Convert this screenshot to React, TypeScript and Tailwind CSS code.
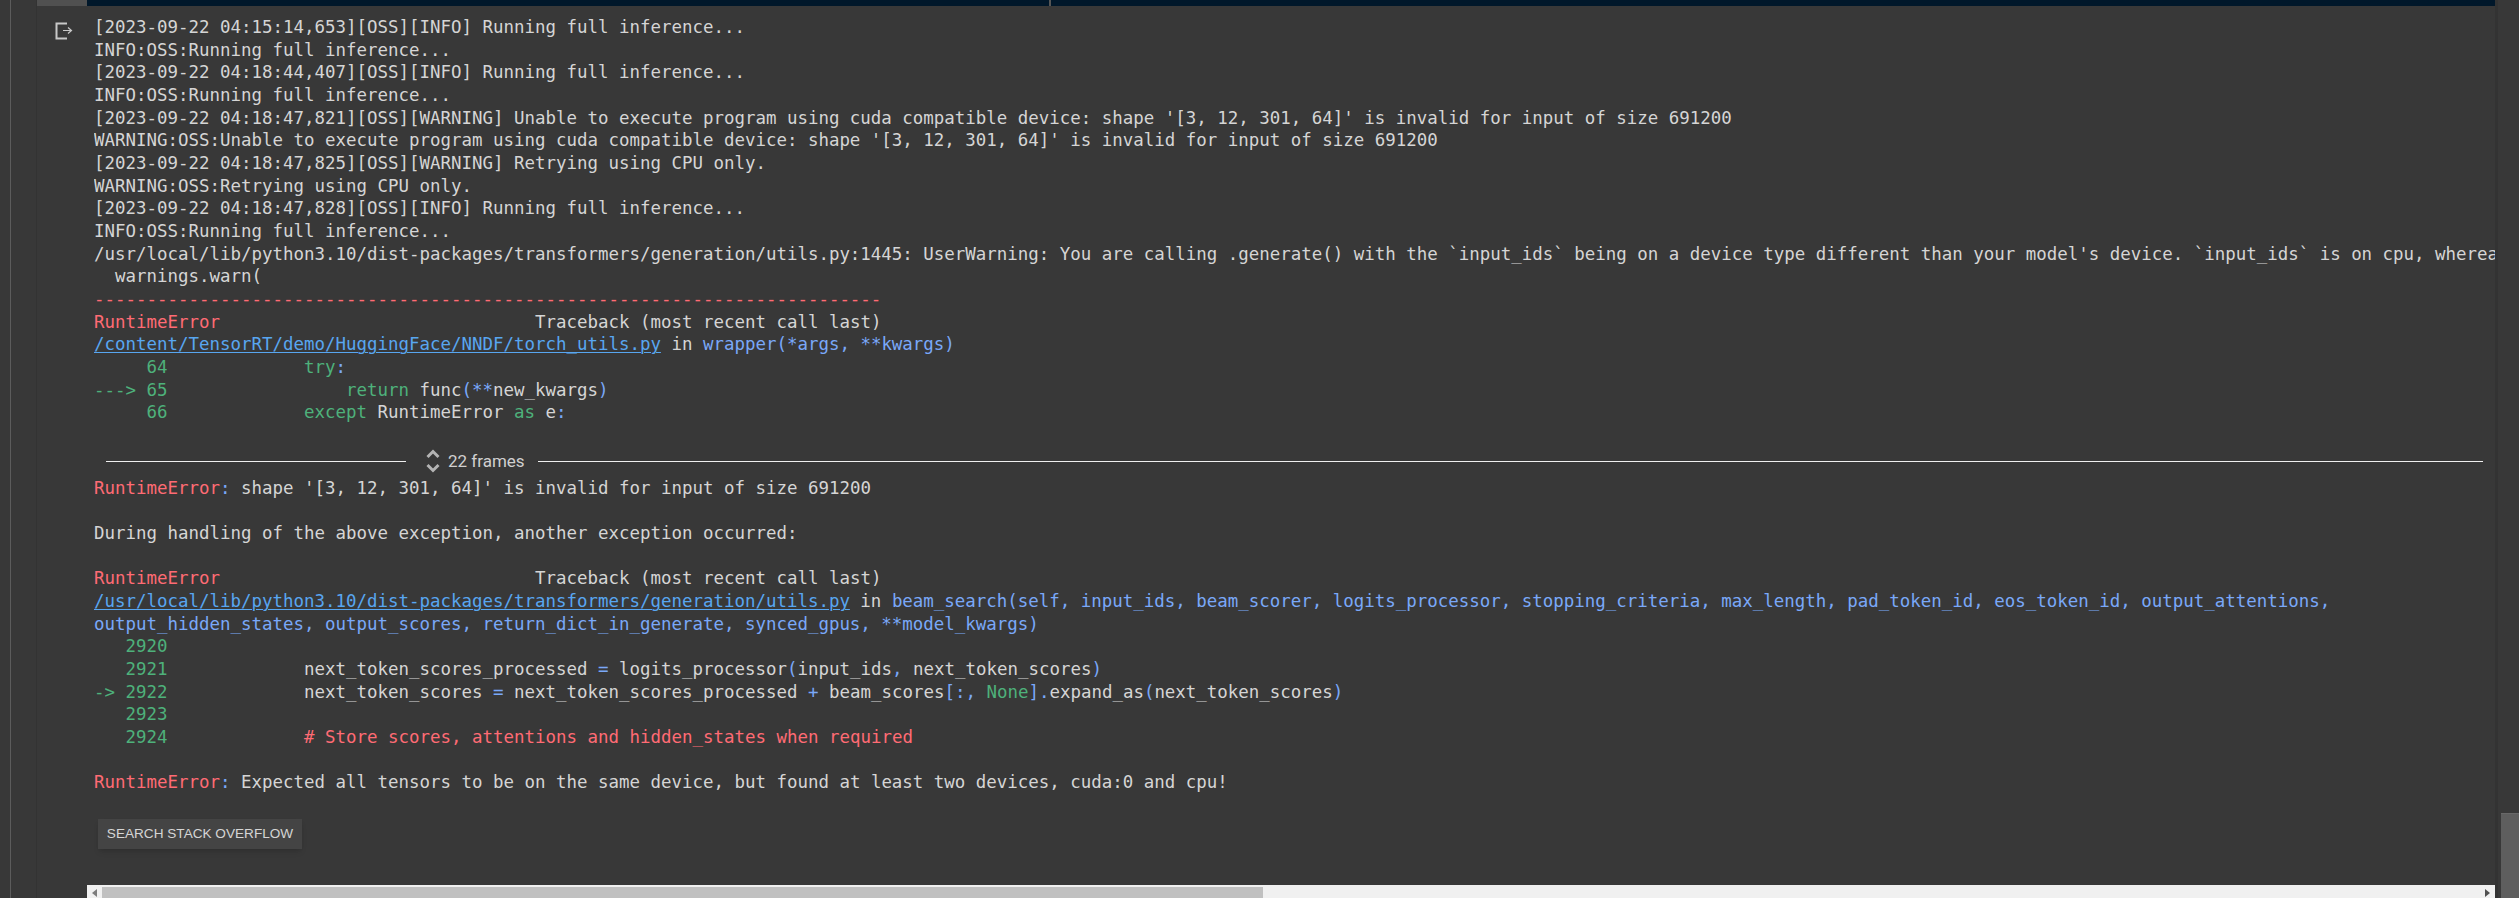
import React from 'react';

const R = ({ children }: { children: React.ReactNode }) => (
  <span className="text-[#ff6b74]">{children}</span>
);
const G = ({ children }: { children: React.ReactNode }) => (
  <span className="text-[#4eb17b]">{children}</span>
);
const B = ({ children }: { children: React.ReactNode }) => (
  <span className="text-[#7aa8f8]">{children}</span>
);
const L = ({ children }: { children: React.ReactNode }) => (
  <span className="text-[#58a6f0] underline decoration-1 underline-offset-2">{children}</span>
);

const Line = ({ children }: { children?: React.ReactNode }) => (
  <div className="h-[22.67px] whitespace-pre">{children}</div>
);

const Traceback = () => (
  <Line>
    <R>RuntimeError</R>
    {'                              Traceback (most recent call last)'}
  </Line>
);

const OutputIcon = () => (
  <svg width="20" height="18" viewBox="0 0 20 18" fill="none" stroke="#c8c8c8">
    <path d="M11 2.5V1.5H1.5V16.5H11V15.5" strokeWidth="2" />
    <path d="M8 8.5H16M13 5.5L16.5 8.5L13 11.5" strokeWidth="1.2" />
  </svg>
);

const UpDownIcon = () => (
  <svg width="14" height="24" viewBox="0 0 14 24" fill="none" stroke="#b4b4b4" strokeWidth="3">
    <path d="M1.5 8L7 2.5L12.5 8" />
    <path d="M1.5 16L7 21.5L12.5 16" />
  </svg>
);

const FramesRow = () => (
  <div className="mt-[22px] flex h-[31px] items-center pl-3">
    <div className="h-px w-[300px] bg-[#f0f0f0]" />
    <div className="ml-5 mr-2 flex items-center">
      <UpDownIcon />
    </div>
    <span className="font-['Roboto',sans-serif] text-[17px] text-[#d0d0d0]">22 frames</span>
    <div className="ml-[13px] mr-3 h-px flex-1 bg-[#f0f0f0]" />
  </div>
);

const App = () => {
  return (
    <div className="flex h-[898px] w-[2519px] overflow-hidden bg-[#383838]">
      <div className="w-[37px] shrink-0 border-r border-[#333333] pl-[10px]">
        <div className="h-full w-[1px] bg-[#5c5c5c]" />
      </div>

      <div className="flex w-[2458px] shrink-0 flex-col">
        <div className="flex h-[6px] shrink-0">
          <div className="w-[50px] bg-[#505050]" />
          <div className="w-[962px] bg-[#00172a]" />
          <div className="w-[2px] bg-[#555555]" />
          <div className="flex-1 bg-[#00172a]" />
        </div>

        <div className="flex min-h-0 flex-1">
          <div className="w-[57px] shrink-0 pl-[18px] pt-[16px]">
            <OutputIcon />
          </div>
          <div className="min-w-0 flex-1 overflow-hidden pt-[10px] font-['DejaVu_Sans_Mono',monospace] text-[17.44px] leading-[22.67px] text-[#d5d5d5]">
            <Line>[2023-09-22 04:15:14,653][OSS][INFO] Running full inference...</Line>
            <Line>INFO:OSS:Running full inference...</Line>
            <Line>[2023-09-22 04:18:44,407][OSS][INFO] Running full inference...</Line>
            <Line>INFO:OSS:Running full inference...</Line>
            <Line>[2023-09-22 04:18:47,821][OSS][WARNING] Unable to execute program using cuda compatible device: shape '[3, 12, 301, 64]' is invalid for input of size 691200</Line>
            <Line>WARNING:OSS:Unable to execute program using cuda compatible device: shape '[3, 12, 301, 64]' is invalid for input of size 691200</Line>
            <Line>[2023-09-22 04:18:47,825][OSS][WARNING] Retrying using CPU only.</Line>
            <Line>WARNING:OSS:Retrying using CPU only.</Line>
            <Line>[2023-09-22 04:18:47,828][OSS][INFO] Running full inference...</Line>
            <Line>INFO:OSS:Running full inference...</Line>
            <Line>/usr/local/lib/python3.10/dist-packages/transformers/generation/utils.py:1445: UserWarning: You are calling .generate() with the `input_ids` being on a device type different than your model's device. `input_ids` is on cpu, whereas</Line>
            <Line>{'  warnings.warn('}</Line>
            <Line>
              <R>---------------------------------------------------------------------------</R>
            </Line>
            <Traceback />
            <Line>
              <L>/content/TensorRT/demo/HuggingFace/NNDF/torch_utils.py</L> in <B>wrapper(*args, **kwargs)</B>
            </Line>
            <Line>
              <G>{'     64             try'}</G><B>:</B>
            </Line>
            <Line>
              <G>{'---> 65                 return'}</G> func<B>(**</B>new_kwargs<B>)</B>
            </Line>
            <Line>
              <G>{'     66             except'}</G> RuntimeError <G>as</G> e<B>:</B>
            </Line>
            <FramesRow />
            <Line>
              <R>RuntimeError</R><B>:</B> shape '[3, 12, 301, 64]' is invalid for input of size 691200
            </Line>
            <Line />
            <Line>During handling of the above exception, another exception occurred:</Line>
            <Line />
            <Traceback />
            <Line>
              <L>/usr/local/lib/python3.10/dist-packages/transformers/generation/utils.py</L> in <B>beam_search(self, input_ids, beam_scorer, logits_processor, stopping_criteria, max_length, pad_token_id, eos_token_id, output_attentions,</B>
            </Line>
            <Line>
              <B>output_hidden_states, output_scores, return_dict_in_generate, synced_gpus, **model_kwargs)</B>
            </Line>
            <Line>
              <G>{'   2920'}</G>
            </Line>
            <Line>
              <G>{'   2921'}</G>
              {'             next_token_scores_processed '}<B>=</B> logits_processor<B>(</B>input_ids<B>,</B> next_token_scores<B>)</B>
            </Line>
            <Line>
              <G>{'-> 2922'}</G>
              {'             next_token_scores '}<B>=</B> next_token_scores_processed <B>+</B> beam_scores<B>[:,</B> <G>None</G><B>].</B>expand_as<B>(</B>next_token_scores<B>)</B>
            </Line>
            <Line>
              <G>{'   2923'}</G>
            </Line>
            <Line>
              <G>{'   2924'}</G>
              <R>{'             # Store scores, attentions and hidden_states when required'}</R>
            </Line>
            <Line />
            <Line>
              <R>RuntimeError</R><B>:</B> Expected all tensors to be on the same device, but found at least two devices, cuda:0 and cpu!
            </Line>
            <button className="ml-1 mt-[25px] flex h-[30px] w-[204px] items-center justify-center bg-[#444444] font-['Liberation_Sans',sans-serif] text-[13.6px] leading-none text-[#d5d5d5] shadow-md">
              SEARCH STACK OVERFLOW
            </button>
          </div>
        </div>

        <div className="ml-[50px] flex h-[13px] shrink-0 bg-[#f0f0f0] pt-[2px]">
          <div className="flex w-[15px] items-center justify-center">
            <div className="h-0 w-0 border-y-[4px] border-r-[5px] border-y-transparent border-r-[#7c7c7c]" />
          </div>
          <div className="h-full w-[1161px] bg-[#c0c0c0]" />
          <div className="flex flex-1 items-center justify-end pr-[5px]">
            <div className="h-0 w-0 border-y-[4px] border-l-[5px] border-y-transparent border-l-[#505050]" />
          </div>
        </div>
      </div>

      <div className="flex w-[24px] shrink-0">
        <div className="w-[3px] bg-[#333333]" />
        <div className="flex flex-1 flex-col justify-end pl-[3px]">
          <div className="h-[85px] border-t border-[#686868] bg-[#5e5e5e]" />
        </div>
      </div>
    </div>
  );
};

export default App;
